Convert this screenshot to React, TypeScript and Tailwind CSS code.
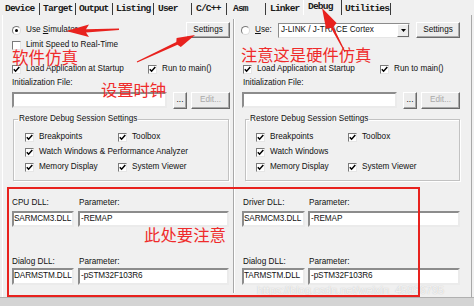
import React from "react";

const Check = ({ checked = true }: { checked?: boolean }) => (
  <span className="inline-flex w-[9px] h-[9px] shrink-0 items-center justify-center bg-white border border-t-[#7a7a7a] border-l-[#7a7a7a] border-r-[#e6e6e6] border-b-[#e6e6e6]">
    {checked && (
      <svg width="7" height="7" viewBox="0 0 7 7">
        <path d="M0.8 3.2 L2.6 5.2 L6.3 1" fill="none" stroke="#000" strokeWidth="1.5" />
      </svg>
    )}
  </span>
);

const Radio = ({ checked }: { checked?: boolean }) => (
  <span className="inline-flex w-[9px] h-[9px] shrink-0 items-center justify-center rounded-full bg-white border border-t-[#7a7a7a] border-l-[#7a7a7a] border-r-[#dcdcdc] border-b-[#dcdcdc]">
    {checked && <span className="w-[3px] h-[3px] rounded-full bg-black" />}
  </span>
);

const Btn = ({ children, className = "", disabled = false }: { children: React.ReactNode; className?: string; disabled?: boolean }) => (
  <div
    className={`flex items-center justify-center bg-[#ececec] border border-t-white border-l-white border-r-[#6a6a6a] border-b-[#6a6a6a] shadow-[inset_-1px_-1px_0_#a8a8a8] text-[8.2px] leading-none ${disabled ? "text-[#a9a9a9]" : "text-[#111]"} ${className}`}
  >
    {children}
  </div>
);

const Box = ({ children, className = "" }: { children?: React.ReactNode; className?: string }) => (
  <div className={`flex items-center bg-white border-2 border-t-[#8c8c8c] border-l-[#8c8c8c] border-r-[#ebebeb] border-b-[#ebebeb] text-[8.2px] tracking-[-0.1px] leading-none text-[#111] whitespace-nowrap overflow-hidden ${className}`}>
    {children}
  </div>
);

const CheckLabel = ({ children, className = "", checked = true }: { children: React.ReactNode; className?: string; checked?: boolean }) => (
  <div className={`flex items-center ${className}`}>
    <Check checked={checked} />
    <span className="ml-[5px] whitespace-nowrap">{children}</span>
  </div>
);

const tabs: { t: string; w: string; pl: string }[] = [
  { t: "Device", w: "w-[40px]", pl: "pl-[5px]" },
  { t: "Target", w: "w-[36px]", pl: "pl-[3px]" },
  { t: "Output", w: "w-[37px]", pl: "pl-[3px]" },
  { t: "Listing", w: "w-[41px]", pl: "pl-[3px]" },
  { t: "User", w: "w-[38px]", pl: "pl-[4px]" },
  { t: "C/C++", w: "w-[35px]", pl: "pl-[4px]" },
  { t: "Asm", w: "w-[39px]", pl: "pl-[6px]" },
];

export default function App() {
  return (
    <div className="relative w-[474px] h-[306px] overflow-hidden bg-[#f0f0f0] font-['Liberation_Sans',Arial,sans-serif] text-[8.2px] leading-none text-[#111]">
      {/* Tab strip */}
      <div className="flex h-[15px] font-['Liberation_Mono',monospace] font-bold text-[9.6px] tracking-[-0.85px] text-[#1a1a1a]">
        {tabs.map((tb) => (
          <div key={tb.t} className={`${tb.w} ${tb.pl} flex items-end pb-[1px] border-r border-[#3a3a3a] mt-[3px] h-[12px] whitespace-nowrap`}>
            {tb.t}
          </div>
        ))}
        <div className="w-[37px] pl-[4px] flex items-end pb-[1px] mt-[3px] h-[12px] whitespace-nowrap">Linker</div>
        <div className="w-[39px] pl-[4px] flex items-end pb-[3px] h-[15px] border-r border-[#3a3a3a] border-l border-l-white whitespace-nowrap">Debug</div>
        <div className="w-[49px] pl-[3px] flex items-end pb-[1px] border-r border-[#3a3a3a] mt-[3px] h-[12px] whitespace-nowrap">Utilities</div>
      </div>

      {/* Page */}
      <div className="flex h-[282px] border-l border-l-white border-r border-r-[#a8a8a8] mx-[2px]">
        {/* Left column */}
        <div className="w-[230px] flex flex-col pl-[9px] pr-[3px]">
          <div className="mt-[7px] h-[16px] flex items-center">
            <Radio checked />
            <span className="ml-[5px]">
              Use <span className="underline">S</span>imulator
            </span>
            <Btn className="ml-auto w-[44px] h-[16px]">Settings</Btn>
          </div>
          <div className="mt-[1px] h-[13px] flex items-center">
            <CheckLabel checked={false}>Limit Speed to Real-Time</CheckLabel>
          </div>
          <div className="mt-[10px] h-[14px] flex items-center">
            <CheckLabel className="w-[136px]">Load Application at Startup</CheckLabel>
            <CheckLabel>Run to main()</CheckLabel>
          </div>
          <div className="mt-[2px] h-[11px] flex items-center">Initialization File:</div>
          <div className="mt-[3px] h-[16px] flex">
            <Box className="w-[155px] h-[16px]" />
            <Btn className="ml-[6px] w-[14px] h-[17px]">...</Btn>
            <Btn className="ml-[4px] w-[39px] h-[17px]" disabled>
              Edit...
            </Btn>
          </div>
          <fieldset className="mt-[6px] ml-[1px] w-[216px] h-[67px] border border-[#c2c2c2] shadow-[1px_1px_0_#fff,inset_1px_1px_0_#fff] pl-[11px]">
            <legend className="ml-[-7px] px-[1px] h-[10px] leading-[10px]">Restore Debug Session Settings</legend>
            <div className="mt-[6px] h-[15px] flex items-center">
              <CheckLabel className="w-[93px]">Breakpoints</CheckLabel>
              <CheckLabel>Toolbox</CheckLabel>
            </div>
            <div className="h-[15px] flex items-center">
              <CheckLabel>Watch Windows &amp; Performance Analyzer</CheckLabel>
            </div>
            <div className="h-[15px] flex items-center">
              <CheckLabel className="w-[93px]">Memory Display</CheckLabel>
              <CheckLabel>System Viewer</CheckLabel>
            </div>
          </fieldset>
          <div className="mt-[17px] h-[10px] flex items-center">
            <span className="w-[67px]">CPU DLL:</span>
            <span>Parameter:</span>
          </div>
          <div className="mt-[3px] h-[16px] flex">
            <Box className="w-[62px] h-[16px]">SARMCM3.DLL</Box>
            <Box className="ml-[4px] w-[151px] h-[16px] pl-[1px]">-REMAP</Box>
          </div>
          <div className="mt-[30px] h-[10px] flex items-center">
            <span className="w-[67px]">Dialog DLL:</span>
            <span>Parameter:</span>
          </div>
          <div className="mt-[1px] h-[17px] flex">
            <Box className="w-[62px] h-[17px]">DARMSTM.DLL</Box>
            <Box className="ml-[4px] w-[151px] h-[17px] pl-[1px]">-pSTM32F103R6</Box>
          </div>
        </div>

        {/* Separator */}
        <div className="w-[2px] my-[4px] border-l border-l-[#a8a8a8] border-r border-r-white" />

        {/* Right column */}
        <div className="flex-1 flex flex-col pl-[7px] pr-[9px]">
          <div className="mt-[7px] h-[16px] flex items-center">
            <div className="w-[37px] flex items-center ml-[-1px]">
              <Radio />
              <span className="ml-[5px]">
                <span className="underline">U</span>se:
              </span>
            </div>
            <div className="w-[132px] h-[15px] flex items-center bg-white border border-t-[#8c8c8c] border-l-[#8c8c8c] border-r-[#e6e6e6] border-b-[#e6e6e6]">
              <span className="pl-[2px] flex-1 whitespace-nowrap">J-LINK / J-TRACE Cortex</span>
              <div className="w-[12px] h-[13px] flex items-center justify-center bg-[#ececec] border border-t-white border-l-white border-r-[#6a6a6a] border-b-[#6a6a6a]">
                <svg width="5" height="3" viewBox="0 0 5 3">
                  <path d="M0 0 H5 L2.5 3 Z" fill="#000" />
                </svg>
              </div>
            </div>
            <Btn className="ml-[6px] w-[44px] h-[16px]">Settings</Btn>
          </div>
          <div className="mt-[1px] h-[13px]" />
          <div className="mt-[10px] h-[14px] flex items-center pl-[1px]">
            <CheckLabel className="w-[137px]">Load Application at Startup</CheckLabel>
            <CheckLabel>Run to main()</CheckLabel>
          </div>
          <div className="mt-[2px] h-[11px] flex items-center pl-[1px]">Initialization File:</div>
          <div className="mt-[3px] h-[16px] flex">
            <Box className="w-[155px] h-[16px]" />
            <Btn className="ml-[6px] w-[14px] h-[17px]">...</Btn>
            <Btn className="ml-[4px] w-[39px] h-[17px]" disabled>
              Edit...
            </Btn>
          </div>
          <fieldset className="mt-[6px] ml-[3px] w-[215px] h-[67px] border border-[#c2c2c2] shadow-[1px_1px_0_#fff,inset_1px_1px_0_#fff] pl-[10px]">
            <legend className="ml-[-7px] px-[1px] h-[10px] leading-[10px]">Restore Debug Session Settings</legend>
            <div className="mt-[6px] h-[15px] flex items-center">
              <CheckLabel className="w-[92px]">Breakpoints</CheckLabel>
              <CheckLabel>Toolbox</CheckLabel>
            </div>
            <div className="h-[15px] flex items-center">
              <CheckLabel>Watch Windows</CheckLabel>
            </div>
            <div className="h-[15px] flex items-center">
              <CheckLabel className="w-[92px]">Memory Display</CheckLabel>
              <CheckLabel>System Viewer</CheckLabel>
            </div>
          </fieldset>
          <div className="mt-[17px] h-[10px] flex items-center pl-[1px]">
            <span className="w-[66px]">Driver DLL:</span>
            <span>Parameter:</span>
          </div>
          <div className="mt-[3px] h-[16px] flex">
            <Box className="w-[63px] h-[16px]">SARMCM3.DLL</Box>
            <Box className="ml-[3px] w-[152px] h-[16px] pl-[1px]">-REMAP</Box>
          </div>
          <div className="mt-[30px] h-[10px] flex items-center pl-[1px]">
            <span className="w-[66px]">Dialog DLL:</span>
            <span>Parameter:</span>
          </div>
          <div className="mt-[1px] h-[17px] flex">
            <Box className="w-[63px] h-[17px]">TARMSTM.DLL</Box>
            <Box className="ml-[3px] w-[152px] h-[17px] pl-[1px]">-pSTM32F103R6</Box>
          </div>
        </div>
      </div>

      {/* Bottom strip */}
      <div className="h-[9px] bg-[#d4d4d4] border-t border-[#b0b0b0]" />

      {/* Watermark */}
      <div className="absolute left-[257px] top-[285px] text-[11px] leading-none text-white/80 [text-shadow:0_0_1px_rgba(120,120,120,0.5)] font-['Liberation_Sans',Arial,sans-serif] whitespace-nowrap">
        https://blog.csdn.net/weixin_45936795
      </div>

      {/* Red annotation box */}
      <div className="absolute left-[7px] top-[187px] w-[413px] h-[110px] border-2 border-[#e8221e]" />

      {/* Red annotation texts */}
      <div className="absolute left-[12px] top-[49px] text-[16.5px] leading-none text-[#ef2b2b] font-['Noto_Sans_CJK_SC',sans-serif] whitespace-nowrap">软件仿真</div>
      <div className="absolute left-[101px] top-[81px] text-[16.3px] leading-none text-[#ef2b2b] font-['Noto_Sans_CJK_SC',sans-serif] whitespace-nowrap">设置时钟</div>
      <div className="absolute left-[241px] top-[46px] text-[16.3px] leading-none text-[#ef2b2b] font-['Noto_Sans_CJK_SC',sans-serif] whitespace-nowrap">注意这是硬件仿真</div>
      <div className="absolute left-[144px] top-[226px] text-[16.4px] leading-none text-[#ef2b2b] font-['Noto_Sans_CJK_SC',sans-serif] whitespace-nowrap">此处要注意</div>

      {/* Arrows */}
      <svg className="absolute left-0 top-0 pointer-events-none" width="474" height="306" viewBox="0 0 474 306">
        <polygon points="66,31 89,24.5 86,29.3 119,28.6 119,30 86,32.6 89,37" fill="#e8221e" />
        <polygon points="195,35 176.6,38.1 176.3,42 136.8,61.5 137.2,62.5 177.5,44.8 180.8,47.1" fill="#e8221e" />
        <polygon points="322,8 336.6,22.9 333.4,26.9 345.4,51.8 344.6,52.2 331,28.1 326,28.5" fill="#e8221e" />
      </svg>
    </div>
  );
}
